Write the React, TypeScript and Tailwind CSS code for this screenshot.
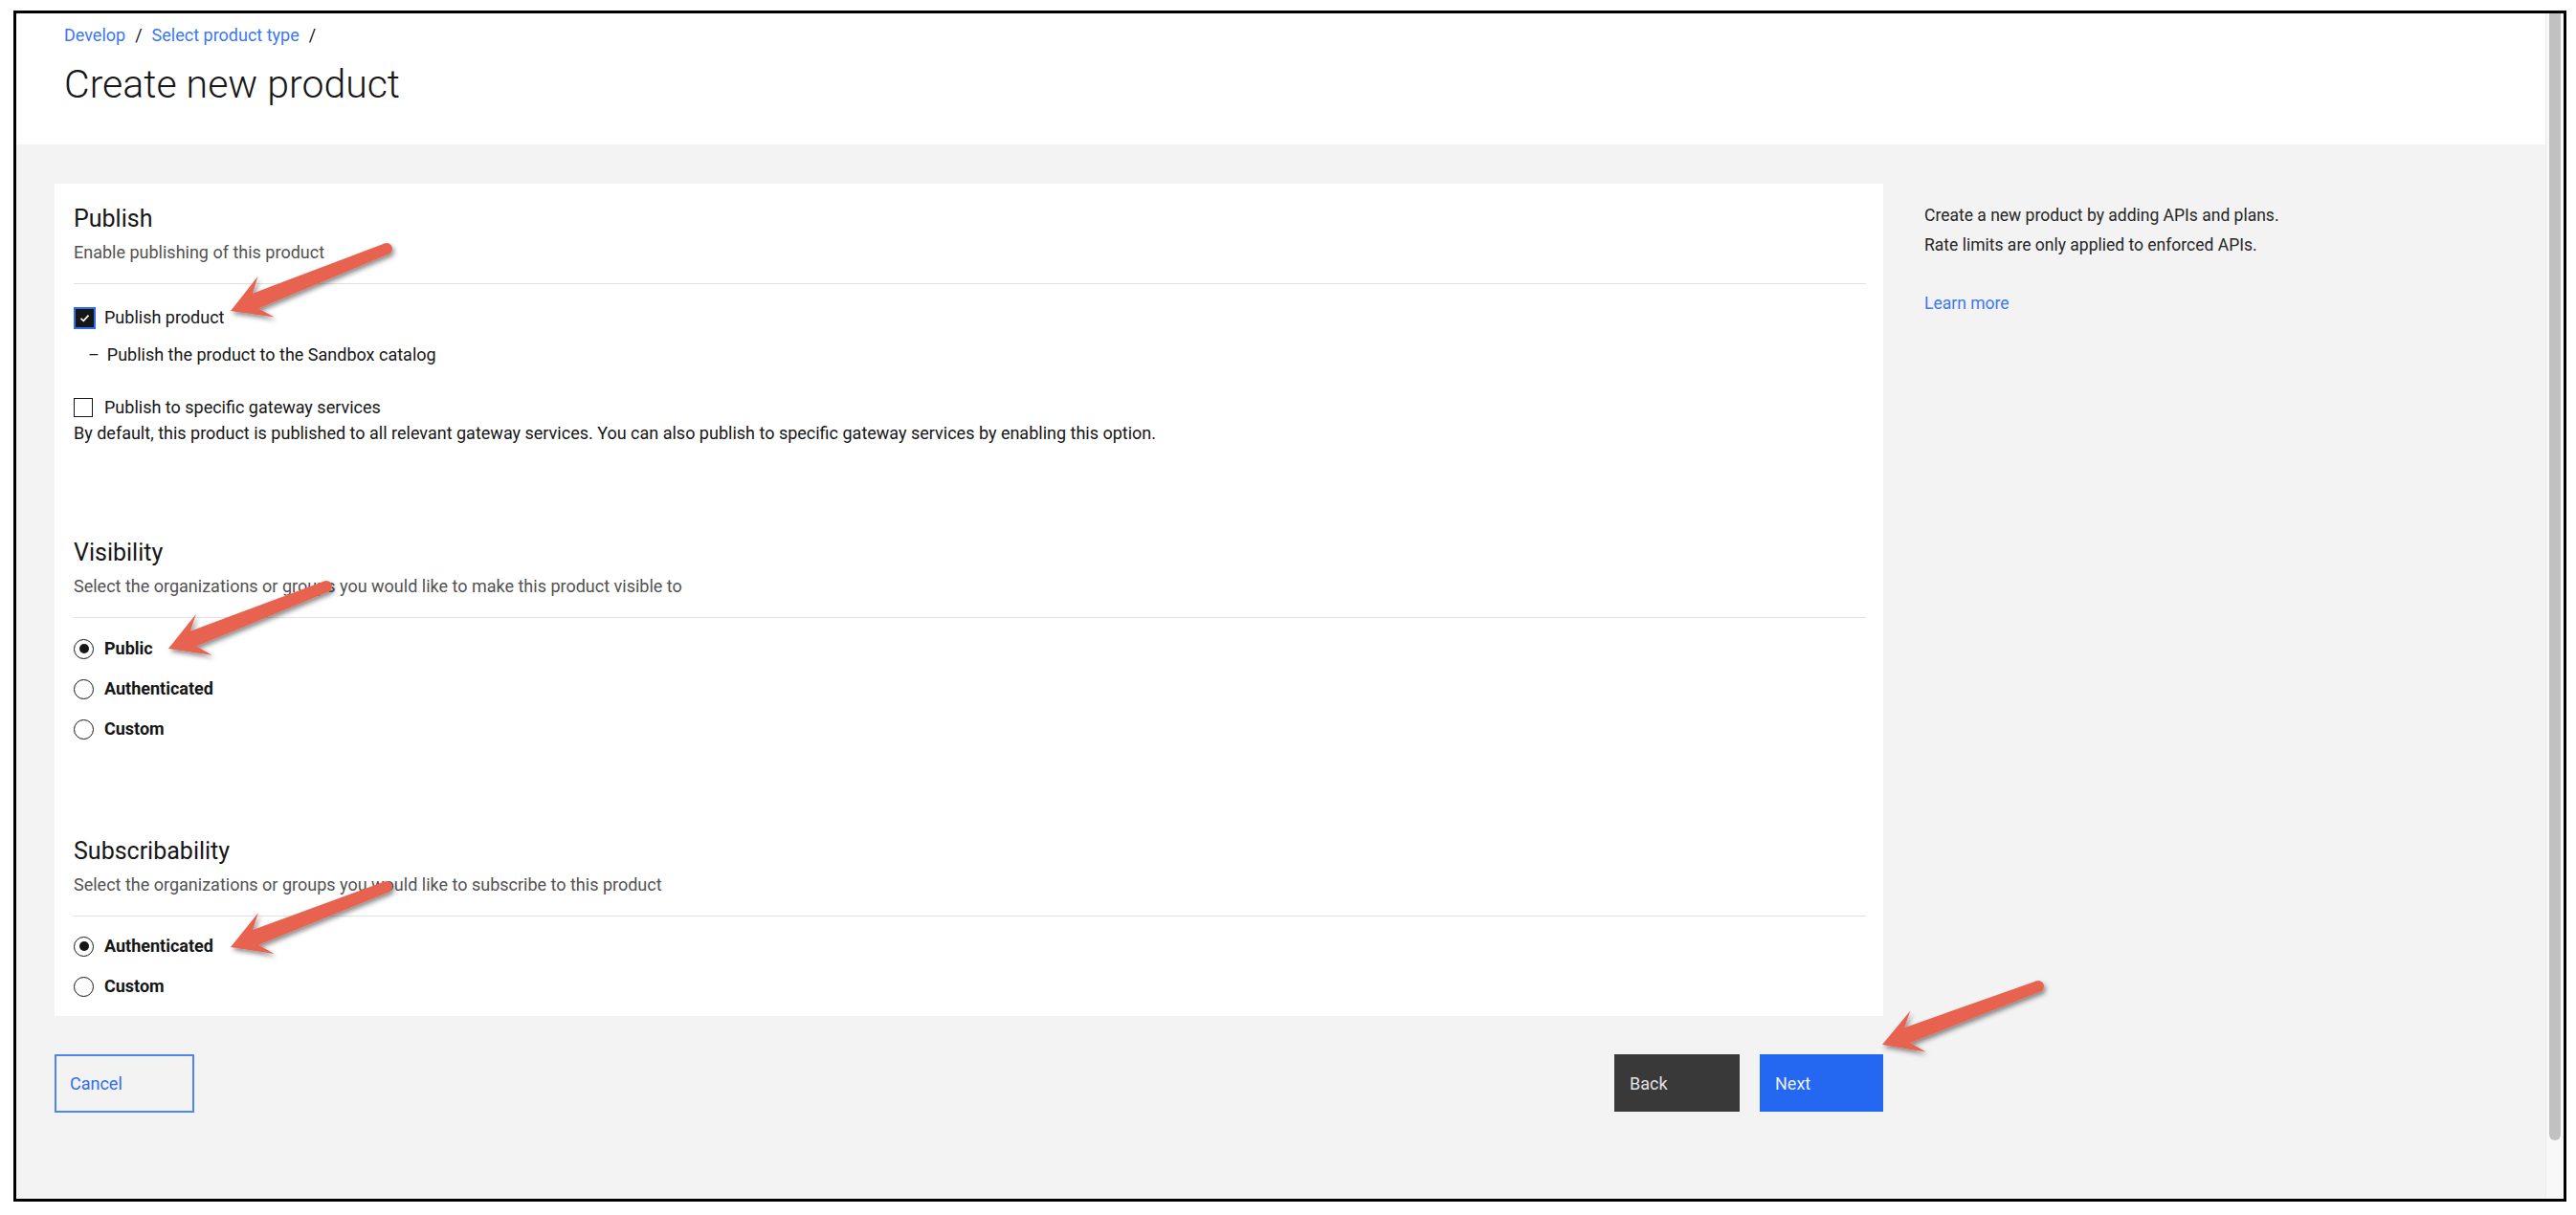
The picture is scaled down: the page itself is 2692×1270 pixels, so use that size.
import React from "react";

type Pt = [number, number];

const arrows: { t: Pt; h: Pt }[] = [
  { t: [404, 260], h: [241, 325] },
  { t: [341, 613], h: [176, 678] },
  { t: [404, 927], h: [241, 990] },
  { t: [2130, 1031], h: [1967, 1092] },
];

function arrowPoints(t: Pt, h: Pt) {
  const dx = h[0] - t[0];
  const dy = h[1] - t[1];
  const L = Math.hypot(dx, dy);
  const ux = dx / L;
  const uy = dy / L;
  const nx = -uy;
  const ny = ux;
  const headLen = 40;
  const neck = 28;
  const headW = 23;
  const s0 = 6;
  const s1 = 8.5;
  const N: Pt = [h[0] - ux * neck, h[1] - uy * neck];
  const B: Pt = [h[0] - ux * headLen, h[1] - uy * headLen];
  const pts: Pt[] = [
    [t[0] + nx * s0, t[1] + ny * s0],
    [N[0] + nx * s1, N[1] + ny * s1],
    [B[0] + nx * headW, B[1] + ny * headW],
    [h[0], h[1]],
    [B[0] - nx * headW, B[1] - ny * headW],
    [N[0] - nx * s1, N[1] - ny * s1],
    [t[0] - nx * s0, t[1] - ny * s0],
  ];
  return pts.map((p) => `${p[0].toFixed(1)},${p[1].toFixed(1)}`).join(" ");
}

function Arrows() {
  return (
    <svg
      className="pointer-events-none absolute left-0 top-0"
      width={2692}
      height={1270}
      viewBox="0 0 2692 1270"
    >
      <defs>
        <filter id="sh" x="-20%" y="-20%" width="140%" height="140%">
          <feDropShadow dx="2" dy="3" stdDeviation="2.5" floodColor="#000" floodOpacity="0.45" />
        </filter>
      </defs>
      {arrows.map((a, i) => (
        <g key={i} filter="url(#sh)" fill="#e8634f">
          <polygon points={arrowPoints(a.t, a.h)} />
          <circle cx={a.t[0]} cy={a.t[1]} r={6} />
        </g>
      ))}
    </svg>
  );
}

function Checkbox({ checked }: { checked?: boolean }) {
  if (checked) {
    return (
      <span className="flex h-[23px] w-[23px] items-center justify-center border-2 border-[#2f6cf6] bg-[#161616]">
        <svg width="13" height="13" viewBox="0 0 13 13">
          <path d="M2.5 6.8 L5.3 9.4 L10.5 3.6" stroke="#fff" strokeWidth="1.6" fill="none" />
        </svg>
      </span>
    );
  }
  return <span className="block h-[20px] w-[20px] border-[1.5px] border-[#161616] bg-white" />;
}

function Radio({ checked }: { checked?: boolean }) {
  return (
    <span className="flex h-[21px] w-[21px] items-center justify-center rounded-full border-[1.5px] border-[#161616] bg-white">
      {checked && <span className="block h-[10px] w-[10px] rounded-full bg-[#161616]" />}
    </span>
  );
}

function RadioRow({ label, checked, className }: { label: string; checked?: boolean; className?: string }) {
  return (
    <div className={`flex h-[24px] items-center ${className ?? ""}`}>
      <span className="flex w-[32px] items-center">
        <Radio checked={checked} />
      </span>
      <span className="text-[18px] font-bold leading-[24px] text-[#161616]">{label}</span>
    </div>
  );
}

function Heading({ title, desc, className }: { title: string; desc: string; className?: string }) {
  return (
    <div className={className}>
      <div className="text-[25px] font-normal leading-[32px] text-[#161616]">{title}</div>
      <div className="mt-[7px] text-[18px] leading-[24px] text-[#525252]">{desc}</div>
      <div className="mt-[20px] h-px bg-[#e0e0e0]" />
    </div>
  );
}

export default function App() {
  return (
    <div className="relative h-[1270px] w-[2692px] overflow-hidden bg-white font-['Roboto','Liberation_Sans',sans-serif]">
      <div className="ml-[14px] mt-[11px] flex h-[1245px] w-[2668px] border-[3px] border-black">
        <div className="flex min-w-0 flex-1 flex-col">
          {/* Header */}
          <div className="h-[137px] bg-white pl-[50px] pt-[11px]">
            <div className="flex items-center text-[18px] leading-[24px]">
              <span className="text-[#3b78f2]">Develop</span>
              <span className="mx-[10px] text-[#161616]">/</span>
              <span className="text-[#3b78f2]">Select product type</span>
              <span className="mx-[10px] text-[#161616]">/</span>
            </div>
            <div className="mt-[16px] text-[41px] font-light leading-[46px] text-[#161616]">Create new product</div>
          </div>

          {/* Body */}
          <div className="flex flex-1 bg-[#f3f3f3] pl-[40px] pt-[41px]">
            <div className="flex w-[1911px] flex-col">
              <div className="bg-white pb-[19px] pl-[20px] pr-[18px] pt-[21px]">
                <Heading title="Publish" desc="Enable publishing of this product" />
                <div className="mt-[23px] flex h-[24px] items-center">
                  <span className="flex w-[32px] items-center">
                    <Checkbox checked />
                  </span>
                  <span className="text-[18px] leading-[24px] text-[#161616]">Publish product</span>
                </div>
                <div className="mt-[15px] flex h-[24px] items-center pl-[15px] text-[18px] leading-[24px] text-[#161616]">
                  <span className="mr-[8px]">–</span>
                  <span>Publish the product to the Sandbox catalog</span>
                </div>
                <div className="mt-[31px] flex h-[24px] items-center">
                  <span className="flex w-[32px] items-center">
                    <Checkbox />
                  </span>
                  <span className="text-[18px] leading-[24px] text-[#161616]">Publish to specific gateway services</span>
                </div>
                <div className="mt-[3px] text-[18px] leading-[24px] text-[#161616]">
                  By default, this product is published to all relevant gateway services. You can also publish to specific gateway services by enabling this option.
                </div>

                <Heading
                  className="mt-[97px]"
                  title="Visibility"
                  desc="Select the organizations or groups you would like to make this product visible to"
                />
                <RadioRow className="mt-[20px]" label="Public" checked />
                <RadioRow className="mt-[18px]" label="Authenticated" />
                <RadioRow className="mt-[18px]" label="Custom" />

                <Heading
                  className="mt-[100px]"
                  title="Subscribability"
                  desc="Select the organizations or groups you would like to subscribe to this product"
                />
                <RadioRow className="mt-[19px]" label="Authenticated" checked />
                <RadioRow className="mt-[18px]" label="Custom" />
              </div>

              <div className="mt-[40px] flex items-start justify-between">
                <button className="flex h-[61px] w-[146px] items-center border-2 border-[#4d86f3] bg-transparent pl-[14px] text-left text-[18px] text-[#2f6cf6]">
                  Cancel
                </button>
                <div className="flex gap-[21px]">
                  <button className="flex h-[60px] w-[131px] items-center bg-[#393939] pl-[16px] text-left text-[18px] text-[#e2e2e2]">
                    Back
                  </button>
                  <button className="flex h-[60px] w-[129px] items-center bg-[#2468f2] pl-[16px] text-left text-[18px] text-[#e8eeff]">
                    Next
                  </button>
                </div>
              </div>
            </div>

            <div className="ml-[43px] pt-[21px] text-[17.5px] leading-[24px] text-[#262626]">
              <p>Create a new product by adding APIs and plans.</p>
              <p className="mt-[7px]">Rate limits are only applied to enforced APIs.</p>
              <p className="mt-[37px] text-[#3b78f2]">Learn more</p>
            </div>
          </div>
        </div>

        {/* Scrollbar */}
        <div className="flex w-[19px] justify-center border-l border-[#ececec] bg-[#f8f8f8]">
          <div className="h-[1178px] w-[12px] rounded-b-full bg-[#c1c1c1]" />
        </div>
      </div>
      <Arrows />
    </div>
  );
}
